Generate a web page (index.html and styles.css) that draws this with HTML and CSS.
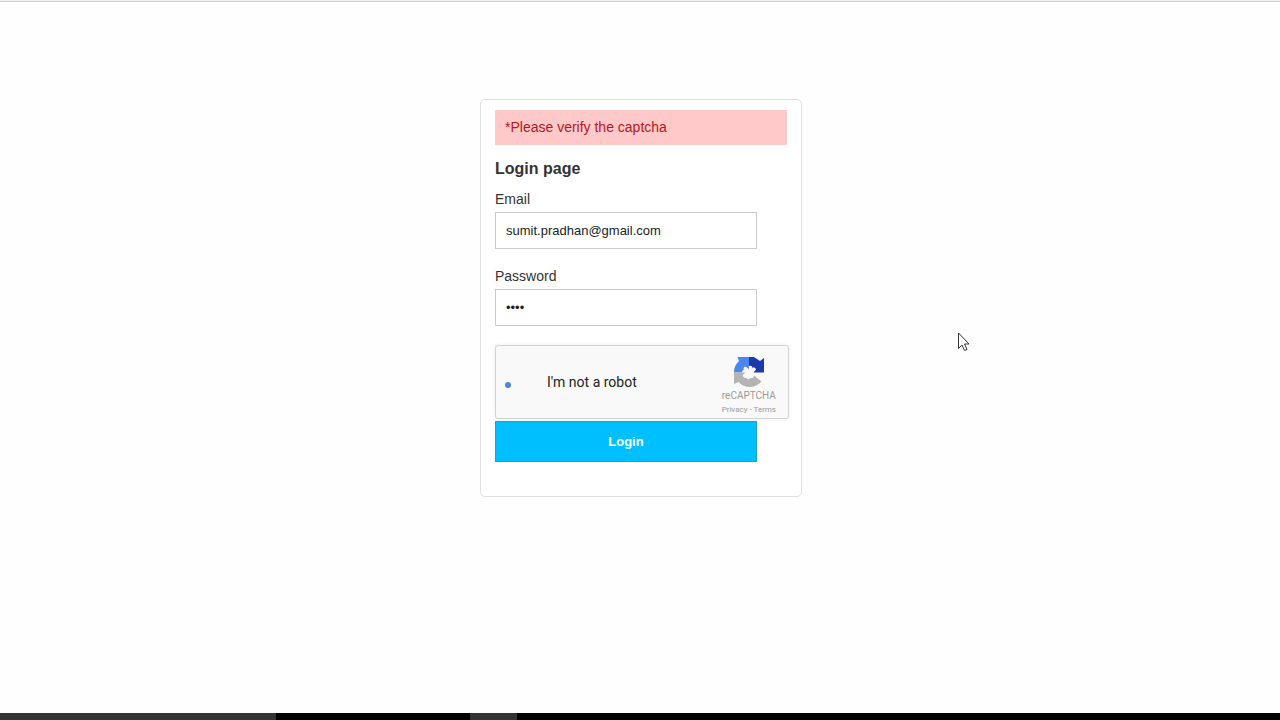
FILE: index.html
```html
<!DOCTYPE html>
<html lang="en">
<head>
    <meta charset="UTF-8">
    <meta name="viewport" content="width=device-width, initial-scale=1.0">
    <title>Login page</title>
    <link rel="stylesheet" href="styles.css">
</head>
<body>
    <div class="top-line"></div>

    <main class="page">
        <form class="login-box" onsubmit="return false">
            <div class="error" role="alert">*Please verify the captcha</div>
            <h1>Login page</h1>

            <div class="field">
                <label for="email">Email</label>
                <input type="email" id="email" name="email" value="sumit.pradhan@gmail.com">
            </div>

            <div class="field">
                <label for="password">Password</label>
                <input type="password" id="password" name="password" value="1234">
            </div>

            <!-- captcha widget, spinner still loading -->
            <div class="captcha">
                <span class="spinner"></span>
                <span class="captcha-text">I'm not a robot</span>
                <div class="captcha-brand">
                    <svg class="captcha-logo" width="30" height="30" viewBox="0 0 30 30" aria-hidden="true">
                        <path fill="#1c3aa9" d="M15 0h5l6 4 4-3v14.500H19.500l2.500-3c-.7-2-2.300-2.500-3.500-1.500-.2-1.500-1.200-2.500-3.500-2z"/>
                        <path fill="#4a86ee" d="M15 0v12l-3.500-2.500c-2 .5-2.500 2-1.500 3.500-1.700.2-2.200 1.200-1.700 2.500H0C0 11 1.500 7 5 4L3.500 0z"/>
                        <path fill="#b4b4b4" d="M0 15.500h11.500L8.500 18c.5 2 2 3.500 4 3 1 1.500 3 1.500 4 0 2 .5 3.500-.5 3.500-2.500l7.500 6c-3 3.500-7 5.500-12 5.500-4 0-8-1.500-11-5L0 27z"/>
                    </svg>
                    <span class="captcha-name">reCAPTCHA</span>
                    <span class="captcha-links"><a href="#">Privacy</a> - <a href="#">Terms</a></span>
                </div>
            </div>

            <button type="submit" class="login-button">Login</button>
        </form>
    </main>

    <div class="taskbar">
        <span class="task-search"></span>
        <span class="task-active"></span>
    </div>

    <svg class="pointer" width="12" height="20" viewBox="0 0 12 20" aria-hidden="true">
        <path d="M.5 1v15.500l3.500-3.500 2.500 5.500 2.500-1-2.500-5.500h4.500z" fill="#fff" stroke="#333"/>
    </svg>
</body>
</html>
```

FILE: styles.css
```css
body {
    margin: 0;
    min-height: 100vh;
    display: flex;
    flex-direction: column;
    background-color: #fefefe;
    color: #333;
    font-family: Arial, "Liberation Sans", sans-serif;
    font-size: 14px;
    line-height: 16px;
}
.top-line {
    height: 1px;
    background-color: #f0f0f0;
    border-bottom: 1px solid #d2d2d2;
}
.page {
    flex: 1;
    padding: 97px 0 40px 2px;
}
.login-box {
    box-sizing: border-box;
    width: 322px;
    margin: 0 auto;
    padding: 10px 14px 34px;
    background-color: #fff;
    border: 1px solid #e0e0e0;
    border-radius: 5px;
}
.error {
    padding: 10px;
    margin-bottom: 14px;
    line-height: 15px;
    background-color: #ffc9c9;
    color: #b8161c;
}
h1 {
    margin: 0 0 12px;
    font-size: 16px;
    line-height: 20px;
}
.field {
    margin-bottom: 19px;
}
.field label {
    display: block;
    margin-bottom: 5px;
}
.field input {
    box-sizing: border-box;
    display: block;
    width: 262px;
    height: 37px;
    padding: 0 10px;
    border: 1px solid #ccc;
    background-color: #fff;
    color: #222;
    font-family: inherit;
    font-size: 13px;
}
.captcha {
    box-sizing: border-box;
    display: flex;
    align-items: center;
    width: 294px;
    height: 74px;
    padding: 0 12px 0 9px;
    margin-bottom: 2px;
    background-color: #f9f9f9;
    border: 1px solid #d3d3d3;
    border-radius: 3px;
    box-shadow: 0 0 4px rgba(0, 0, 0, 0.08);
    font-family: Roboto, "Liberation Sans", sans-serif;
}
.spinner {
    width: 6px;
    height: 6px;
    margin: 6px 36px 0 0;
    border-radius: 50%;
    background-color: #4a86e0;
}
.captcha-text {
    color: #222;
}
.captcha-brand {
    display: flex;
    flex-direction: column;
    align-items: center;
    margin-left: auto;
    padding-top: 8px;
    color: #999;
}
.captcha-name {
    font-size: 10px;
    line-height: 18px;
}
.captcha-links {
    font-size: 8px;
    line-height: 10px;
}
.captcha-links a {
    color: inherit;
    text-decoration: none;
}
.login-button {
    display: block;
    width: 262px;
    height: 41px;
    padding: 0;
    border: 1px solid #1fa5b5;
    background-color: #00bfff;
    color: #fff;
    font-family: inherit;
    font-size: 13px;
    font-weight: bold;
    cursor: pointer;
}
.taskbar {
    display: flex;
    height: 7px;
    background-color: #000;
}
.task-search {
    width: 276px;
    margin-right: 194px;
    background-color: #333;
}
.task-active {
    width: 47px;
    background-color: #333;
}
.pointer {
    position: absolute;
    top: 332px;
    left: 958px;
}
```
